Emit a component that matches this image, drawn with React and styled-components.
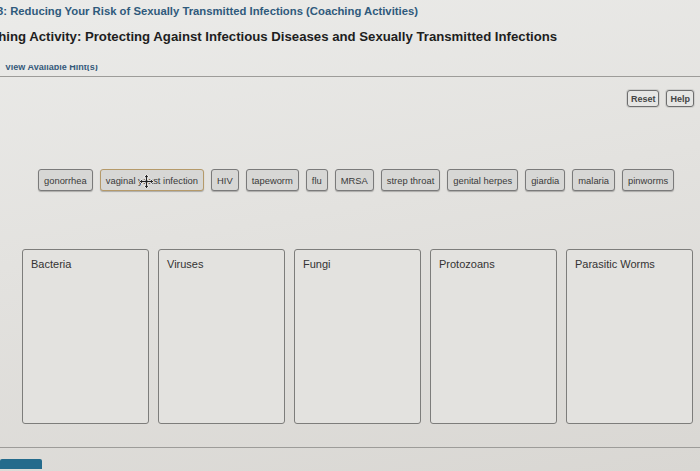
import React from "react";
import styled, { createGlobalStyle } from "styled-components";

const GlobalStyle = createGlobalStyle`
  html, body {
    margin: 0;
    padding: 0;
  }
  body {
    width: 700px;
    height: 471px;
    overflow: hidden;
    font-family: "Liberation Sans", Arial, sans-serif;
    background: linear-gradient(170deg, #ebebe9 0%, #e3e2df 45%, #d9d7d3 100%);
  }
`;

const Page = styled.div`
  width: 700px;
  height: 471px;
  overflow: hidden;
  display: flex;
  flex-direction: column;
`;

const Crumb = styled.div`
  margin: 5px 0 0 -3px;
  font-size: 11.3px;
  font-weight: bold;
  color: #2f5a7c;
  white-space: nowrap;
`;

const Title = styled.h1`
  margin: 12px 0 0 -34px;
  font-size: 13.2px;
  font-weight: bold;
  color: #1e1e1e;
  white-space: nowrap;
`;

const HintLink = styled.div`
  margin: 21px 0 0 5px;
  height: 6px;
  overflow: hidden;
  font-size: 9px;
  font-weight: bold;
  line-height: 5px;
  color: #35597a;
`;

const Panel = styled.div`
  margin-top: 5px;
  border-top: 1px solid #9d9c99;
  border-bottom: 1px solid #9d9c99;
  height: 372px;
  display: flex;
  flex-direction: column;
  box-sizing: border-box;
`;

const Toolbar = styled.div`
  display: flex;
  justify-content: flex-end;
  gap: 7px;
  padding: 13px 6px 0 0;
`;

const SmallButton = styled.button`
  font-family: "Liberation Sans", Arial, sans-serif;
  font-size: 9px;
  font-weight: bold;
  color: #444;
  background: #e6e6e4;
  border: 1px solid #6e6e6e;
  border-radius: 3px;
  height: 17px;
  padding: 0 3px;
  box-shadow: 0 0 0 1px #cfcfcd;
`;

const ChipRow = styled.div`
  display: flex;
  gap: 7px;
  padding: 62px 0 0 38px;
`;

const Chip = styled.div`
  position: relative;
  height: 20px;
  display: flex;
  align-items: center;
  padding: 0 5px;
  font-size: 9.4px;
  color: #3a3a3a;
  background: #d7d7d5;
  border: 1px solid ${p => (p.$active ? "#b59a6a" : "#7a7a7a")};
  border-radius: 3px;
  box-shadow: 0 1px 1px rgba(0, 0, 0, 0.25);
  white-space: nowrap;
`;

const Cursor = styled.svg`
  position: absolute;
  left: 38px;
  top: 4px;
`;

const BinRow = styled.div`
  display: flex;
  gap: 9px;
  padding: 58px 0 0 22px;
`;

const Bin = styled.div`
  width: 127px;
  height: 175px;
  box-sizing: border-box;
  border: 1.5px solid #7d7d7b;
  border-radius: 3px;
  background: #e3e2df;
  padding: 8px 8px;
  font-size: 11px;
  color: #333;
`;

const SubmitTab = styled.div`
  margin-top: 11px;
  width: 42px;
  height: 10px;
  background: #246b8c;
  border-radius: 2px 2px 0 0;
`;

const items = [
  "gonorrhea",
  "vaginal yeast infection",
  "HIV",
  "tapeworm",
  "flu",
  "MRSA",
  "strep throat",
  "genital herpes",
  "giardia",
  "malaria",
  "pinworms",
];

const bins = ["Bacteria", "Viruses", "Fungi", "Protozoans", "Parasitic Worms"];

const MoveCursor = () => (
  <Cursor width="15" height="15" viewBox="0 0 14 14">
    <path
      d="M7 0.5 L9.5 3 H8 V6 H11 V4.5 L13.5 7 L11 9.5 V8 H8 V11 H9.5 L7 13.5 L4.5 11 H6 V8 H3 V9.5 L0.5 7 L3 4.5 V6 H6 V3 H4.5 Z"
      fill="#222"
      stroke="#fff"
      strokeWidth="0.8"
    />
  </Cursor>
);

export default function App() {
  return (
    <Page>
      <GlobalStyle />
      <Crumb>3: Reducing Your Risk of Sexually Transmitted Infections (Coaching Activities)</Crumb>
      <Title>Coaching Activity: Protecting Against Infectious Diseases and Sexually Transmitted Infections</Title>
      <HintLink>View Available Hint(s)</HintLink>
      <Panel>
        <Toolbar>
          <SmallButton>Reset</SmallButton>
          <SmallButton>Help</SmallButton>
        </Toolbar>
        <ChipRow>
          {items.map(item => (
            <Chip key={item} $active={item === "vaginal yeast infection"}>
              {item}
              {item === "vaginal yeast infection" && <MoveCursor />}
            </Chip>
          ))}
        </ChipRow>
        <BinRow>
          {bins.map(b => (
            <Bin key={b}>{b}</Bin>
          ))}
        </BinRow>
      </Panel>
      <SubmitTab />
    </Page>
  );
}
